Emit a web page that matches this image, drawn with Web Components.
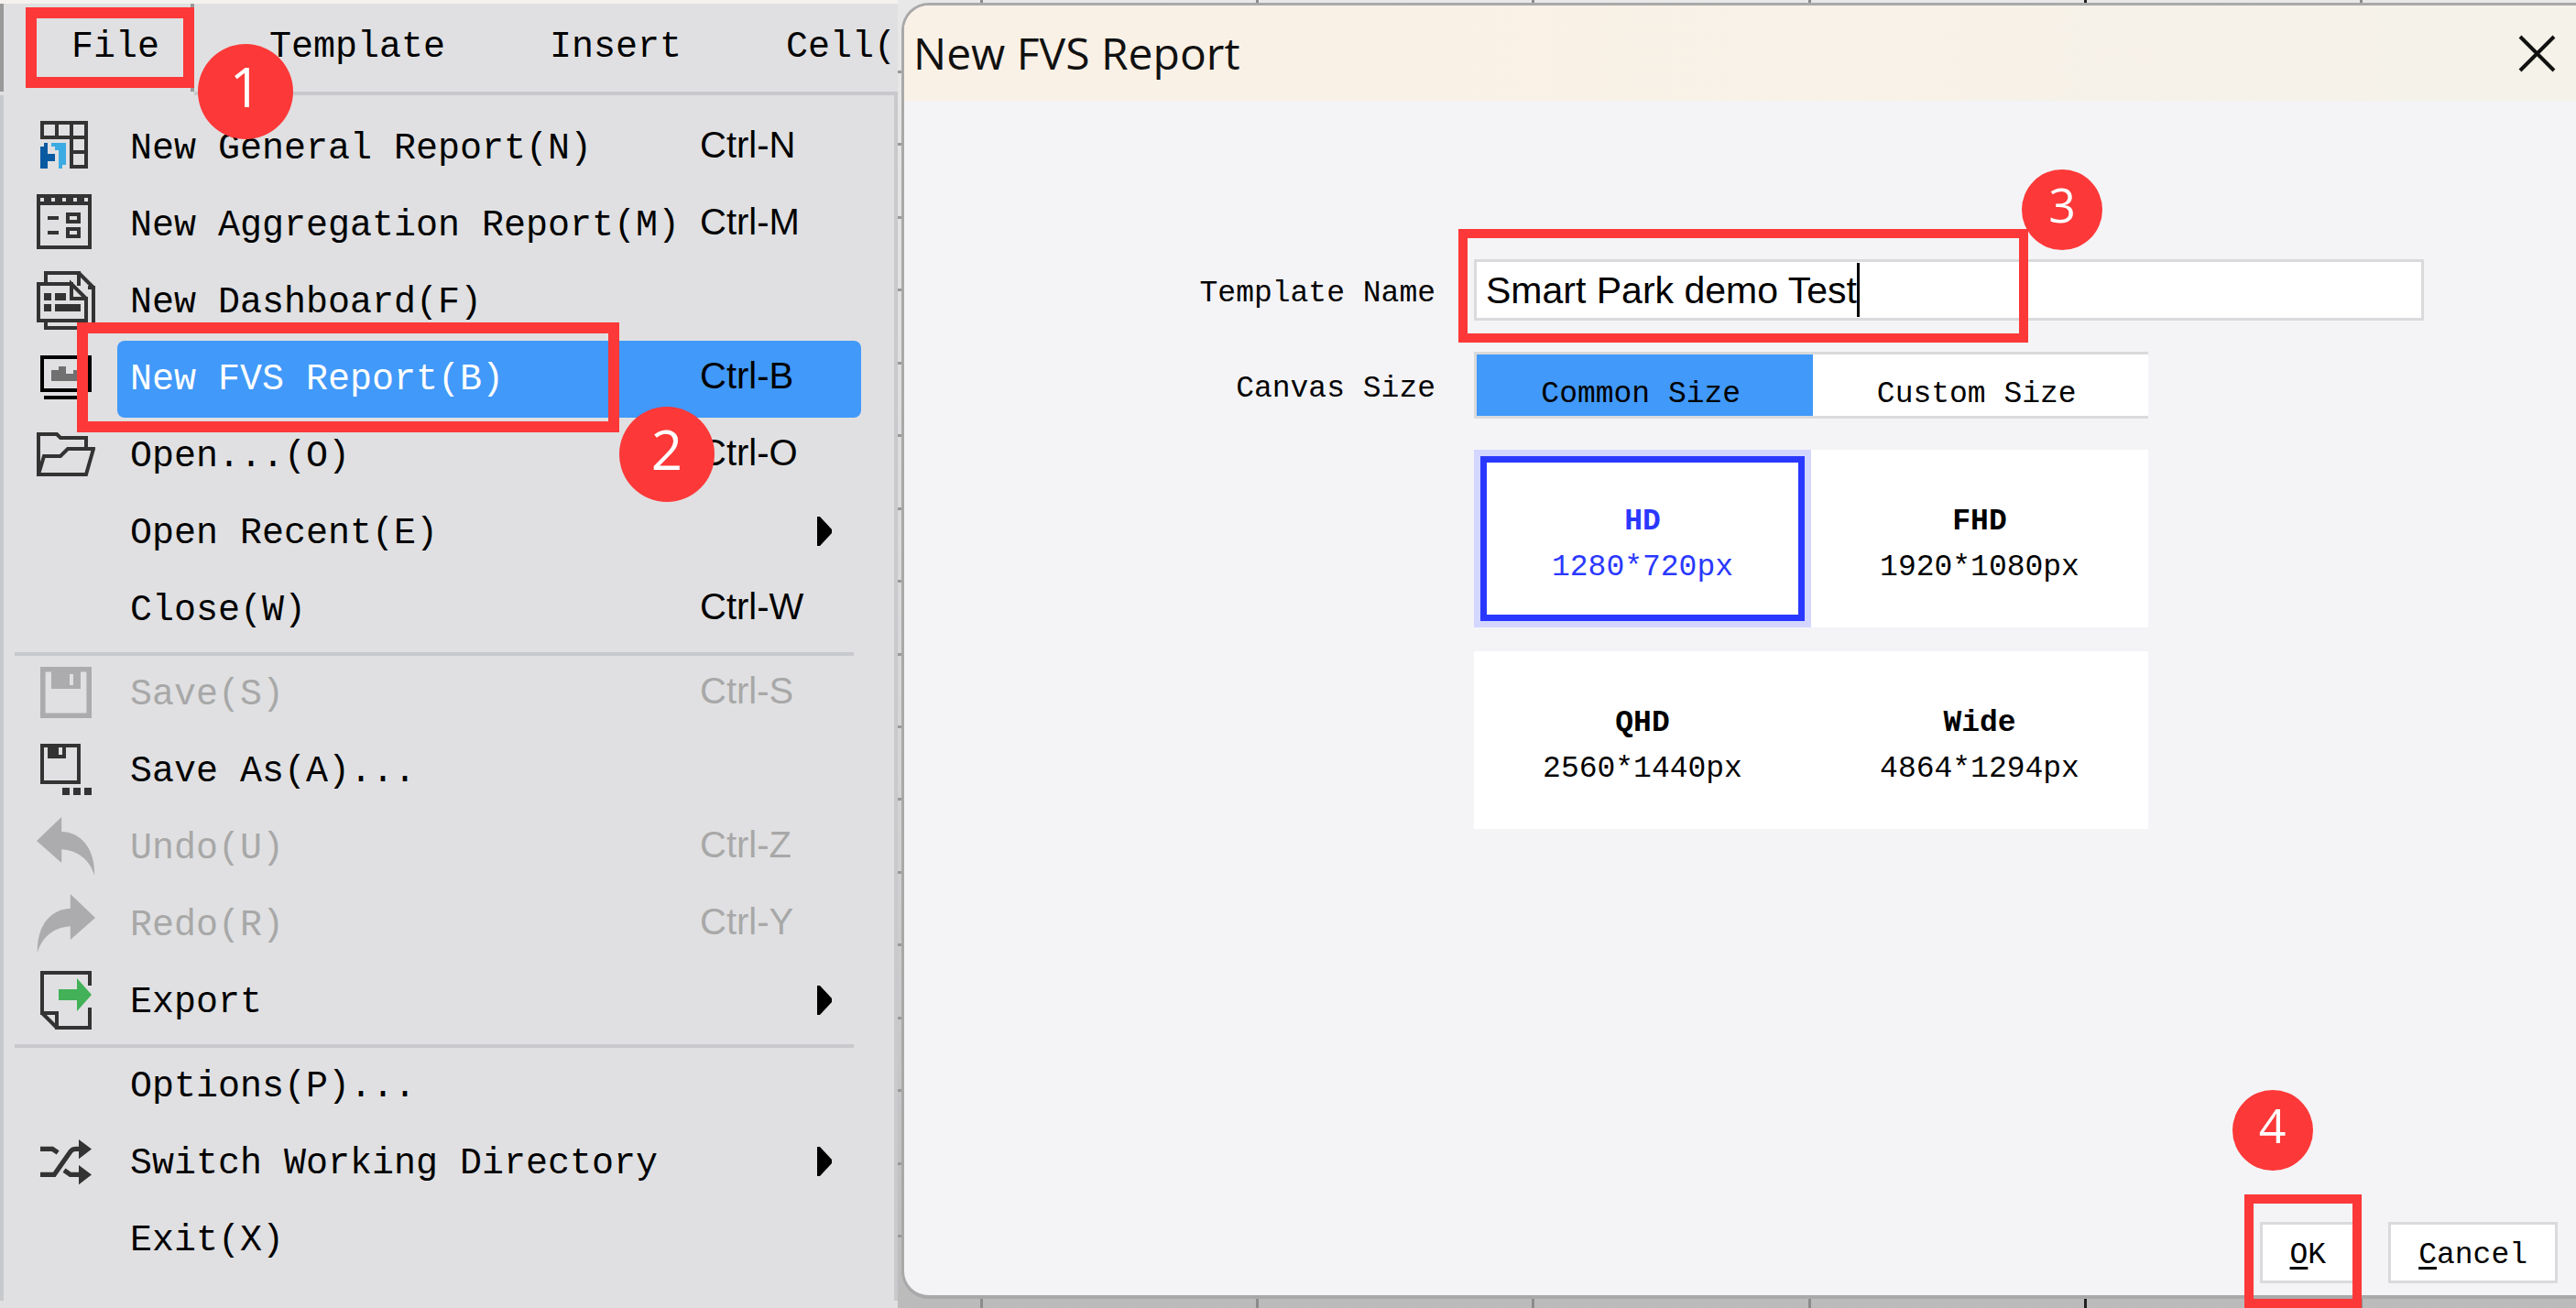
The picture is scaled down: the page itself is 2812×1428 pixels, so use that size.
<!DOCTYPE html>
<html lang="en">
<head>
<meta charset="utf-8">
<title>New FVS Report</title>
<style>
  html, body {
    margin: 0;
    height: 100%;
  }

  body {
    overflow: hidden;
    font-family: "Liberation Mono", "Courier New", monospace;
    color: #000;
  }
</style>
</head>
<body>
<designer-app></designer-app>

<script>
const ICONS = {
  general: `
    <path fill="#333" fill-rule="evenodd" d="M1 1h13v13H9V6H1zM2 2v3h3V2zM6 2v3h3V2zM10 2v3h3V2zM10 6v3h3V6zM10 10v3h3v-3z"/>
    <path fill="#0a5aa2" d="M2 7h1v3h2v2H3v2H1V8h1z"/>
    <path fill="#3cabe3" d="M4 7h4v6H7v1H6V9H5V8H4z"/>`,
  aggregation: `
    <path fill="#333" fill-rule="evenodd" d="M0 0h15v15H0zM1 1v1h1V1zM4 1v1h1V1zM7 1v1h1V1zM10 1v1h1V1zM13 1v1h1V1zM1 3v11h13V3z"/>
    <path fill="#333" fill-rule="evenodd" d="M3 6h3v1H3zM3 10h3v1H3zM8 5h4v3H8zM9 6v1h2V6zM8 9h4v3H8zM9 10v1h2v-1z"/>`,
  dashboard: `
    <path fill="none" stroke="#333" d="M2.5 3V.5h9v4h4v11h-13V14M11.5.5l4 4"/>
    <path fill="#e0e0e2" d="M1 4h13v9H1z"/>
    <path fill="none" stroke="#333" d="M10 3.500H.5v10h13V7.500h-4v-4l4 4"/>
    <path fill="#333" d="M2 6h2v2H2zM5 6h3v2H5zM2 9h2v2H2zM5 9h7v2H5z"/>`,
  fvs: `
    <path fill="none" stroke="#000" d="M1.5 2.500h13v9h-13zM2 13.500h12"/>
    <path fill="#707070" d="M4 9V6h2V5h2v2h2V6h2v3z"/>`,
  open: `
    <path fill="none" stroke="#333" d="M.5 13.500v-11h5l1 1h7v3M.5 13.500l1.500-5h4.500l2-2h7l-2 7z"/>`,
  save: `
    <path fill="none" stroke="#acacae" stroke-width="1.400" d="M1.700 1.700h12.600v12.600H1.700z"/>
    <path fill="#acacae" fill-rule="evenodd" d="M4 1h8v6H4zM9 3v3h1V3z"/>`,
  saveas: `
    <path fill="none" stroke="#333" d="M1.500 1.500h10v10h-10z"/>
    <path fill="#333" fill-rule="evenodd" d="M3 1h5v4H3zM6 2v2h1V2zM7 13h2v2H7zM10 13h2v2h-2zM13 13h2v2h-2z"/>`,
  undo: `
    <path fill="#acacae" d="M0 6.500 6.800 0v4C11.500 4 16 8 15.800 16 14.500 11.500 11 9 6.800 8.800V12.500z"/>`,
  redo: `
    <path fill="#acacae" d="M16 6.500 9.200 0v4C4.500 4 0 8 .2 16 1.500 11.500 5 9 9.200 8.800V12.500z"/>`,
  export: `
    <path fill="none" stroke="#333" d="M14.500 4V.5h-13v11h4v4h9V10M1.500 11.500l4 4"/>
    <path fill="#42b157" d="M6 5h5V2l4 4.500-4 4.500V8H6z"/>`,
  shuffle: `
    <path fill="none" stroke="#333" stroke-width="1.300" d="M1 4.600h3.300l1.500 1M1 11.600h3.800L9.300 5.200q.5-.6 1.500-.6H13M7.500 10.400l1.700 1.200H13"/>
    <path fill="#333" d="M11.500 2 15 4.600 11.500 7.300zM11.500 9 15 11.600 11.500 14.300z"/>`
};

class LineIcon extends HTMLElement {
  connectedCallback() {
    const root = this.attachShadow({ mode: 'open' });
    const shapes = ICONS[this.getAttribute('name')] || '';
    root.innerHTML = `
      <style>
        :host { display: block; width: 64px; height: 64px; }
        svg { display: block; width: 100%; height: 100%; }
      </style>
      <svg viewBox="0 0 16 16" aria-hidden="true">${shapes}</svg>
    `;
  }
}

class HighlightBox extends HTMLElement {
  connectedCallback() {
    this.attachShadow({ mode: 'open' }).innerHTML = `
      <style>
        :host {
          position: absolute;
          z-index: 1;
          box-sizing: border-box;
          border: var(--line, 12px) solid #fc3838;
          pointer-events: none;
        }
      </style>
    `;
  }
}

class StepBadge extends HTMLElement {
  connectedCallback() {
    this.attachShadow({ mode: 'open' }).innerHTML = `
      <style>
        :host {
          position: absolute;
          z-index: 2;
          display: flex;
          align-items: center;
          justify-content: center;
          box-sizing: border-box;
          width: 104px;
          height: 104px;
          padding-bottom: 12px;
          border-radius: 50%;
          background: #fc3838;
          color: #fff;
          font: 60px/60px "Open Sans", "Noto Sans", sans-serif;
        }
        :host([small]) {
          width: 88px;
          height: 88px;
          font-size: 52px;
        }
      </style>
      <slot></slot>
    `;
  }
}

class MenuEntry extends HTMLElement {
  connectedCallback() {
    const root = this.attachShadow({ mode: 'open' });
    const icon = this.getAttribute('icon');
    const keys = this.getAttribute('keys');
    root.innerHTML = `
      <style>
        :host { display: block; position: relative; }
        button {
          display: flex;
          align-items: center;
          gap: 24px;
          width: 100%;
          padding: 0 36px;
          border: 0;
          background: none;
          color: #000;
          font: inherit;
          text-align: left;
        }
        button:disabled { color: #a8a8a8; }
        .icon { flex: none; width: 64px; height: 64px; padding-bottom: 4px; }
        .line {
          flex: 1;
          display: grid;
          grid-template-columns: 622px 1fr auto;
          align-items: center;
          height: 84px;
          padding: 0 32px 0 14px;
          box-sizing: border-box;
          border-radius: 8px;
        }
        .label { padding-top: 2px; white-space: nowrap; }
        .keys {
          padding-bottom: 8px;
          font-family: "Liberation Sans", Arial, sans-serif;
          white-space: nowrap;
        }
        .arrow { display: block; width: 16px; height: 32px; margin-bottom: 4px; }
        :host([active]) .line { background: #4199f9; }
        :host([active]) .label { color: #fff; }
      </style>
      <button type="button" role="menuitem" ${this.hasAttribute('disabled') ? 'disabled' : ''}>
        <span class="icon">${icon ? `<line-icon name="${icon}"></line-icon>` : ''}</span>
        <span class="line">
          <span class="label"><slot></slot></span>
          <span class="keys">${keys || ''}</span>
          ${this.hasAttribute('submenu') ? '<svg class="arrow" viewBox="0 0 16 32"><path d="M0 0h3l13 14v4L3 32H0z"/></svg>' : ''}
        </span>
      </button>
      <slot name="mark"></slot>
    `;
  }
}

class MenuDivider extends HTMLElement {
  connectedCallback() {
    this.attachShadow({ mode: 'open' }).innerHTML = `
      <style>
        :host { display: block; height: 4px; margin: 4px 44px 0 12px; background: #c8c9cc; }
      </style>
    `;
  }
}

class FileMenu extends HTMLElement {
  connectedCallback() {
    this.attachShadow({ mode: 'open' }).innerHTML = `
      <style>
        :host {
          display: flex;
          flex-direction: column;
          box-sizing: border-box;
          border-top: 4px solid #f3f2ee;
          background: #e0e0e2;
          font-size: 40px;
          line-height: 48px;
        }
        nav { display: flex; height: 100px; }
        nav button {
          padding: 0;
          border: 0;
          background: none;
          color: inherit;
          font: inherit;
        }
        .tab {
          position: relative;
          box-sizing: border-box;
          width: 212px;
          height: 96px;
          padding-left: 74px;
          border: solid #999;
          border-width: 0 4px;
          display: flex;
          align-items: center;
        }
        .rest {
          flex: 1;
          min-width: 0;
          display: flex;
          gap: 114px;
          overflow: hidden;
          padding-left: 82px;
          border-bottom: 4px solid #c8c9cc;
        }
        .tab highlight-box { left: 24px; top: 4px; width: 184px; height: 88px; }
        .tab step-badge { left: 212px; top: 44px; }
        .list {
          flex: 1;
          margin-bottom: 8px;
          padding-top: 16px;
          border: solid #c8c9cc;
          border-width: 0 4px;
        }
        menu-entry highlight-box { left: 80px; top: -20px; width: 592px; height: 120px; }
        menu-entry step-badge { left: 672px; top: 72px; }
      </style>
      <nav>
        <div class="tab">
          <button type="button">File</button>
          <highlight-box></highlight-box>
          <step-badge>1</step-badge>
        </div>
        <div class="rest">
          <button type="button">Template</button>
          <button type="button">Insert</button>
          <button type="button">Cell(</button>
        </div>
      </nav>
      <div class="list" role="menu">
        <menu-entry icon="general" keys="Ctrl-N">New General Report(N)</menu-entry>
        <menu-entry icon="aggregation" keys="Ctrl-M">New Aggregation Report(M)</menu-entry>
        <menu-entry icon="dashboard">New Dashboard(F)</menu-entry>
        <menu-entry icon="fvs" keys="Ctrl-B" active>New FVS Report(B)
          <highlight-box slot="mark"></highlight-box>
          <step-badge slot="mark">2</step-badge>
        </menu-entry>
        <menu-entry icon="open" keys="Ctrl-O">Open...(O)</menu-entry>
        <menu-entry submenu>Open Recent(E)</menu-entry>
        <menu-entry keys="Ctrl-W">Close(W)</menu-entry>
        <menu-divider></menu-divider>
        <menu-entry icon="save" keys="Ctrl-S" disabled>Save(S)</menu-entry>
        <menu-entry icon="saveas">Save As(A)...</menu-entry>
        <menu-entry icon="undo" keys="Ctrl-Z" disabled>Undo(U)</menu-entry>
        <menu-entry icon="redo" keys="Ctrl-Y" disabled>Redo(R)</menu-entry>
        <menu-entry icon="export" submenu>Export</menu-entry>
        <menu-divider></menu-divider>
        <menu-entry>Options(P)...</menu-entry>
        <menu-entry icon="shuffle" submenu>Switch Working Directory</menu-entry>
        <menu-entry>Exit(X)</menu-entry>
      </div>
    `;
  }
}

class SizeOption extends HTMLElement {
  connectedCallback() {
    const checked = this.hasAttribute('checked');
    this.attachShadow({ mode: 'open' }).innerHTML = `
      <style>
        :host { display: block; }
        label {
          display: flex;
          flex-direction: column;
          align-items: center;
          position: relative;
          box-sizing: border-box;
          height: 194px;
          padding-top: 54px;
          background: #fff;
          line-height: 50px;
        }
        input {
          appearance: none;
          position: absolute;
          inset: 0;
          margin: 0;
        }
        input:checked {
          border: 7px solid #d3d6fe;
          outline: 7px solid #2a38ff;
          outline-offset: -14px;
        }
        :host([checked]) label { color: #2a38ff; }
      </style>
      <label>
        <input type="radio" name="size" ${checked ? 'checked' : ''}>
        <b>${this.getAttribute('name')}</b>
        <span><slot></slot></span>
      </label>
    `;
  }
}

class DialogButton extends HTMLElement {
  connectedCallback() {
    this.attachShadow({ mode: 'open' }).innerHTML = `
      <style>
        :host { display: block; position: relative; }
        button {
          display: block;
          height: 67px;
          padding: 6px 30px 0;
          border: 3px solid #d9dadc;
          background: #fff;
          color: inherit;
          font: inherit;
        }
      </style>
      <button type="button"><slot></slot></button>
      <slot name="mark"></slot>
    `;
  }
}

class ReportDialog extends HTMLElement {
  connectedCallback() {
    this.attachShadow({ mode: 'open' }).innerHTML = `
      <style>
        :host {
          display: flex;
          flex-direction: column;
          box-sizing: border-box;
          border: solid #a9a9a9;
          border-width: 3px 0 4px 3px;
          border-radius: 30px 0 0 30px;
          background: #f4f4f7;
          font-size: 33px;
          line-height: 40px;
        }
        header {
          display: flex;
          align-items: center;
          justify-content: space-between;
          height: 104px;
          padding: 0 22px 0 10px;
          border-radius: 27px 0 0 0;
          background: linear-gradient(to right, #faf1e6 30%, #f5f2e9 90%);
        }
        h1 {
          margin: 0;
          color: #111;
          font: 400 48px/64px "Open Sans", "Noto Sans", sans-serif;
        }
        header button {
          padding: 0;
          border: 0;
          background: none;
        }
        header svg { display: block; width: 41px; height: 41px; }
        form {
          flex: 1;
          display: grid;
          grid-template-columns: 280px 1fr;
          align-content: start;
          gap: 34px 42px;
          padding: 173px 166px 0 300px;
        }
        .name {
          align-self: center;
          padding-top: 8px;
          text-align: right;
          white-space: nowrap;
        }
        .field {
          position: relative;
          display: flex;
          align-items: center;
          box-sizing: border-box;
          height: 67px;
          padding-left: 10px;
          border: 3px solid #d9dadc;
          background: #fff;
        }
        .field input {
          field-sizing: content;
          padding: 0;
          border: 0;
          outline: 0;
          background: none;
          color: #000;
          font: 41px/48px "Liberation Sans", Arial, sans-serif;
        }
        .caret { width: 3px; height: 59px; background: #000; }
        .field highlight-box { --line: 10px; left: -20px; top: -36px; width: 622px; height: 124px; }
        .field step-badge { left: 595px; top: -101px; }
        .tabs, .sizes { width: 736px; }
        .tabs {
          display: flex;
          box-sizing: border-box;
          height: 73px;
          border: solid #d9dadc;
          border-width: 3px 0 3px 3px;
        }
        .tabs button {
          flex: 1;
          padding: 20px 8px 0 0;
          border: 0;
          background: #fff;
          color: #000;
          font: inherit;
        }
        .tabs button[aria-selected="true"] { background: #4199f9; }
        .sizes {
          grid-column: 2;
          display: grid;
          grid-template-columns: 1fr 1fr;
          row-gap: 26px;
        }
        footer {
          display: flex;
          justify-content: flex-end;
          gap: 35px;
          padding: 0 20px 13px;
        }
        footer highlight-box { --line: 10px; left: -17px; top: -30px; width: 128px; height: 124px; }
        footer step-badge { left: -30px; top: -144px; }
        u { text-underline-offset: 4px; text-decoration-thickness: 3px; }
      </style>
      <header>
        <h1>New FVS Report</h1>
        <button type="button" aria-label="Close">
          <svg viewBox="0 0 41 41"><path fill="none" stroke="#111" stroke-width="4" d="M2 2l37 37M39 2L2 39"/></svg>
        </button>
      </header>
      <form>
        <label class="name" for="template-name">Template Name</label>
        <div class="field">
          <input id="template-name" type="text" value="Smart Park demo Test">
          <span class="caret"></span>
          <highlight-box></highlight-box>
          <step-badge small>3</step-badge>
        </div>
        <span class="name" id="canvas-size">Canvas Size</span>
        <div class="tabs" role="tablist" aria-labelledby="canvas-size">
          <button type="button" role="tab" aria-selected="true">Common Size</button>
          <button type="button" role="tab" aria-selected="false">Custom Size</button>
        </div>
        <div class="sizes">
          <size-option name="HD" checked>1280*720px</size-option>
          <size-option name="FHD">1920*1080px</size-option>
          <size-option name="QHD">2560*1440px</size-option>
          <size-option name="Wide">4864*1294px</size-option>
        </div>
      </form>
      <footer>
        <dialog-button><u>O</u>K<highlight-box slot="mark"></highlight-box><step-badge small slot="mark">4</step-badge></dialog-button>
        <dialog-button><u>C</u>ancel</dialog-button>
      </footer>
    `;
  }
}

class DesignerApp extends HTMLElement {
  connectedCallback() {
    const rows = '<i></i>'.repeat(17);
    const cols = '<i></i>'.repeat(6);
    this.attachShadow({ mode: 'open' }).innerHTML = `
      <style>
        :host {
          display: flex;
          min-height: 100vh;
        }
        file-menu { flex: 0 0 980px; min-width: 0; }
        main {
          flex: 1;
          position: relative;
          display: flex;
          padding: 3px 0 10px 4px;
          background: linear-gradient(to bottom, #e8e8e8, #d4d4d4 60%, #bbb);
        }
        report-dialog { flex: 1; position: relative; }
        /* sheet grid lines that show round the dialog */
        .rows, .cols {
          position: absolute;
          display: flex;
          justify-content: space-between;
        }
        .rows { flex-direction: column; left: 0; top: 77px; bottom: 77px; width: 8px; }
        .cols { left: 90px; right: 233px; top: 0; bottom: 0; }
        .rows i { height: 3px; background: #999; }
        .cols i { width: 3px; background: #8c8c8c; }
        /* page boundary */
        .cols i:nth-child(5) { background: #222; }
      </style>
      <file-menu></file-menu>
      <main>
        <div class="rows">${rows}</div>
        <div class="cols">${cols}</div>
        <report-dialog></report-dialog>
      </main>
    `;
  }
}

customElements.define('line-icon', LineIcon);
customElements.define('highlight-box', HighlightBox);
customElements.define('step-badge', StepBadge);
customElements.define('menu-entry', MenuEntry);
customElements.define('menu-divider', MenuDivider);
customElements.define('file-menu', FileMenu);
customElements.define('size-option', SizeOption);
customElements.define('dialog-button', DialogButton);
customElements.define('report-dialog', ReportDialog);
customElements.define('designer-app', DesignerApp);
</script>
</body>
</html>
